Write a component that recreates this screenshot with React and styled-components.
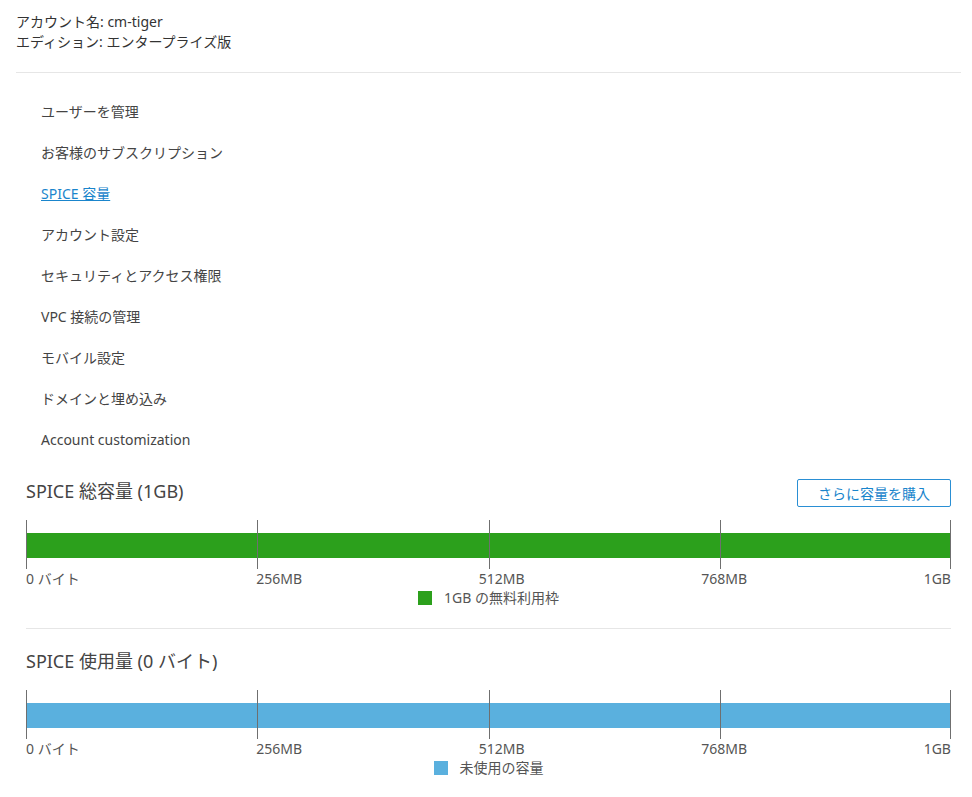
import React from 'react'
import styled, { createGlobalStyle } from 'styled-components'

const GlobalStyle = createGlobalStyle`
  body {
    margin: 0;
    background: #fff;
    font-family: "Noto Sans", "Noto Sans CJK JP", sans-serif;
    color: #444;
  }
`

const navItems = [
  'ユーザーを管理',
  'お客様のサブスクリプション',
  'SPICE 容量',
  'アカウント設定',
  'セキュリティとアクセス権限',
  'VPC 接続の管理',
  'モバイル設定',
  'ドメインと埋め込み',
  'Account customization',
]

const ticks = ['0 バイト', '256MB', '512MB', '768MB', '1GB']

const UsageChart = ({ color, legend }) => (
  <>
    <Chart>
      {[0, 25, 50, 75, 100].map(p => (
        <Tick key={p} $end={p === 100} style={{ left: `${p}%` }} />
      ))}
      <Bar $color={color} />
    </Chart>
    <Labels>
      {ticks.map(t => <span key={t}>{t}</span>)}
    </Labels>
    <Legend>
      <Swatch $color={color} />
      {legend}
    </Legend>
  </>
)

const App = () => {
  return (
    <>
      <GlobalStyle />
      <Page>
        <AccountInfo>
          <div>アカウント名: cm-tiger</div>
          <div>エディション: エンタープライズ版</div>
        </AccountInfo>
        <Divider />
        <Nav>
          {navItems.map(item => (
            <NavItem key={item} $active={item === 'SPICE 容量'}>{item}</NavItem>
          ))}
        </Nav>
        <Section>
          <HeadRow>
            <Heading>SPICE 総容量 (1GB)</Heading>
            <BuyButton>さらに容量を購入</BuyButton>
          </HeadRow>
          <UsageChart color="#2ca01c" legend="1GB の無料利用枠" />
          <SectionDivider />
          <HeadRow>
            <Heading>SPICE 使用量 (0 バイト)</Heading>
          </HeadRow>
          <UsageChart color="#5ab0de" legend="未使用の容量" />
        </Section>
      </Page>
    </>
  )
}

const Page = styled.div`
  padding: 12px 11px 20px 16px;
`

const AccountInfo = styled.div`
  font-size: 14px;
  line-height: 20px;
  color: #333;
`

const Divider = styled.hr`
  margin: 20px 0 0;
  border: 0;
  border-top: 1px solid #e6e6e6;
`

const Nav = styled.nav`
  display: flex;
  flex-direction: column;
  padding: 18px 0 0 25px;
`

const NavItem = styled.a`
  display: block;
  height: 41px;
  line-height: 41px;
  font-size: 14px;
  color: ${p => (p.$active ? '#1a85cc' : '#444')};
  text-decoration: ${p => (p.$active ? 'underline' : 'none')};
  cursor: pointer;
`

const Section = styled.section`
  margin: 19px 10px 0;
`

const HeadRow = styled.div`
  display: flex;
  justify-content: space-between;
  align-items: flex-start;
  height: 24px;
`

const Heading = styled.h2`
  margin: 0;
  font-size: 18px;
  line-height: 24px;
  font-weight: 400;
  color: #444;
`

const BuyButton = styled.button`
  height: 28px;
  width: 154px;
  background: #fff;
  border: 1px solid #2a8fd4;
  border-radius: 2px;
  color: #1a85cc;
  font-family: inherit;
  font-size: 14px;
  cursor: pointer;
`

const Chart = styled.div`
  position: relative;
  margin-top: 17px;
  padding-top: 13px;
  height: 36px;
`

const Tick = styled.div`
  position: absolute;
  top: 0;
  bottom: 0;
  width: 1px;
  margin-left: ${p => (p.$end ? '-1px' : '0')};
  background: #6f6f6f;
  z-index: 1;
`

const Bar = styled.div`
  height: 25px;
  background: ${p => p.$color};
`

const Labels = styled.div`
  display: flex;
  justify-content: space-between;
  font-size: 14px;
  line-height: 20px;
  color: #555;
`

const Legend = styled.div`
  display: flex;
  justify-content: center;
  align-items: center;
  gap: 12px;
  font-size: 14px;
  line-height: 18px;
  color: #555;
`

const Swatch = styled.span`
  width: 14px;
  height: 14px;
  background: ${p => p.$color};
`

const SectionDivider = styled.hr`
  margin: 21px 0 20px;
  border: 0;
  border-top: 1px solid #e6e6e6;
`

export default App
